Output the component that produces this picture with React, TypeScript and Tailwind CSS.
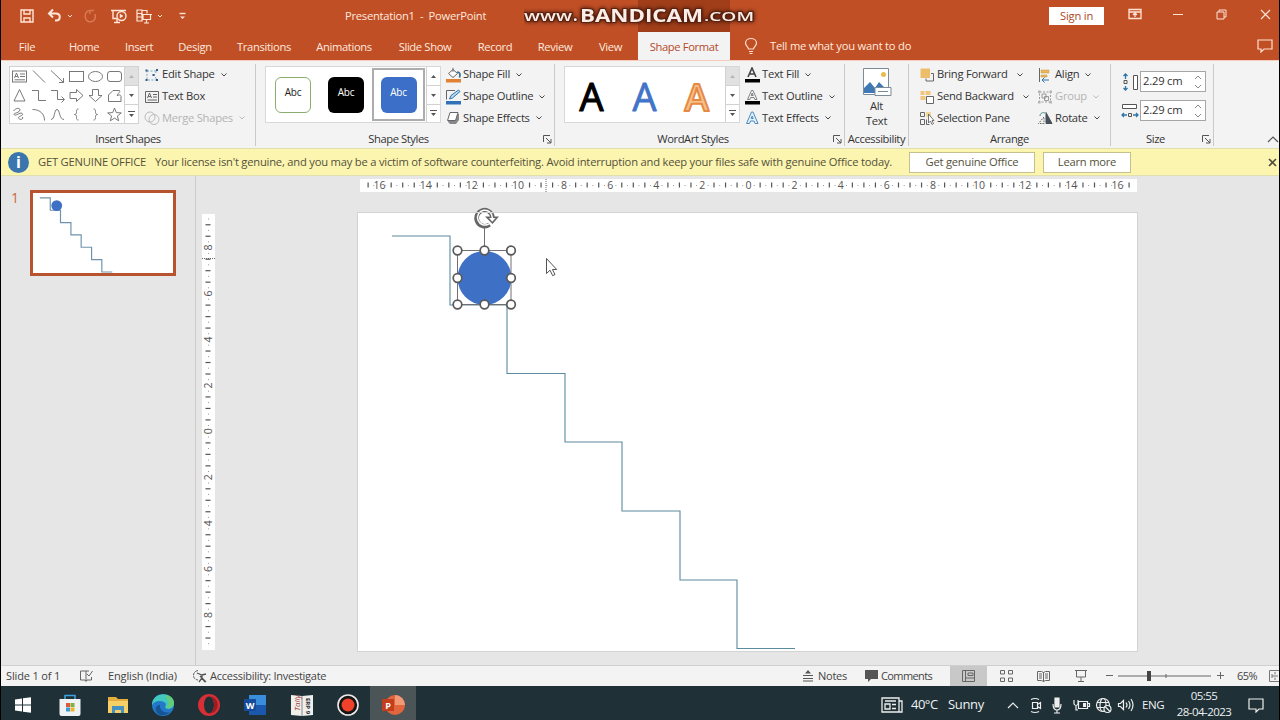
import type { ReactNode } from 'react';
import clsx from 'clsx';

const TABS = [
  { name: 'File', w: 'w-[52px]' },
  { name: 'Home', w: 'w-[62px]' },
  { name: 'Insert', w: 'w-[48px]' },
  { name: 'Design', w: 'w-[64px]' },
  { name: 'Transitions', w: 'w-[74px]' },
  { name: 'Animations', w: 'w-[86px]' },
  { name: 'Slide Show', w: 'w-[76px]' },
  { name: 'Record', w: 'w-[64px]' },
  { name: 'Review', w: 'w-[56px]' },
  { name: 'View', w: 'w-[55px]' },
];

const STAIRS =
  'M34 24H92V93H149V161.500H207V230H264V299H322V368H379V436.500H437';

// Outline shapes of the "Insert Shapes" gallery, each on a 19x19 cell
const SHAPES: ReactNode[] = [
  <><rect x="2.500" y="4" width="14" height="11" /><path d="M4.500 11l2-5 2 5M5.200 9.500h2.600M10 7h5M10 9.500h5M4.500 12.800h10.500" /></>,
  <path d="M4 3.500L16 15.500" />,
  <path d="M3 3.500L15.500 15.500M15.500 11v4.500H11" />,
  <rect x="2.500" y="4.500" width="14" height="10" />,
  <ellipse cx="9.500" cy="9.500" rx="7" ry="5" />,
  <rect x="2.500" y="4.500" width="14" height="10" rx="2.500" />,
  <path d="M9.500 3.500L15 15H4z" />,
  <path d="M3 4.500h6.500v10H17" />,
  <path d="M3 4.500h6.500v9H16M13.500 10.500l3 3-3 3" />,
  <path d="M3 6.500h6.500v-3l6.500 6-6.500 6v-3H3z" />,
  <path d="M6.500 3.500h6v6h3.500l-6.500 6-6.500-6h3.500z" />,
  <path d="M3.500 15.500V9L8 4.500h6.500c1.500 2-3 3-2 5.500 1-2 4-1 3.500 1v4.500z" />,
  <path d="M3.500 6c3-4 8-3 6 0-2 2.500-7 2-5 4 2 1 7-4 8-1 1 2-5 2-4 4s5 2 4-1" />,
  <path d="M3.500 4.500c8 0 12 5 12 11" />,
  <path d="M3 14.500c4 0 3-10 6-10s2 10 7 10" />,
  <path d="M11.500 4c-4 0 0 5-4 5.500 4 .5 0 5.500 4 5.500" />,
  <path d="M7.500 4c4 0 0 5 4 5.500-4 .5 0 5.500-4 5.500" />,
  <path d="M9.500 3l1.800 4.600 5 .3-3.900 3.100 1.300 4.800-4.200-2.700-4.200 2.700 1.300-4.800-3.900-3.100 5-.3z" />,
];

function Chevron({ className }: { className?: string }) {
  return (
    <svg viewBox="0 0 6 4" className={clsx('h-1 w-1.5 shrink-0', className)} fill="none" stroke="currentColor" strokeWidth=".9">
      <path d="M.5 .5L3 3 5.500 .5" />
    </svg>
  );
}

function GalleryScroll({ dimTop = true }: { dimTop?: boolean }) {
  return (
    <div className="flex w-[14px] flex-col border-l border-[#d2d2d2] bg-white text-[#555]">
      <div className={clsx('flex h-[19px] items-center justify-center border-b border-[#d2d2d2]', dimTop && 'bg-[#e1e1e1] text-[#b5b5b5]')}>
        <svg viewBox="0 0 5 3" className="h-[3px] w-[5px]" fill="currentColor"><path d="M0 3L2.500 0 5 3z" /></svg>
      </div>
      <div className="flex h-[19px] items-center justify-center border-b border-[#d2d2d2]">
        <svg viewBox="0 0 5 3" className="h-[3px] w-[5px]" fill="currentColor"><path d="M0 0h5L2.500 3z" /></svg>
      </div>
      <div className="flex flex-1 items-center justify-center">
        <svg viewBox="0 0 7 7" className="size-[7px]" fill="currentColor"><path d="M0 0h7v1H0zM1 3h5L3.500 6z" /></svg>
      </div>
    </div>
  );
}

interface CmdProps {
  icon: ReactNode;
  label: string;
  disabled?: boolean;
  arrow?: boolean;
  arrowGap?: string;
}

function Cmd({ icon, label, disabled, arrow = true, arrowGap = 'ml-[6px]' }: CmdProps) {
  return (
    <div className={clsx('flex h-[21.700px] items-center whitespace-nowrap', disabled ? 'text-[#b4b4b4]' : 'text-[#333]')}>
      <svg viewBox="0 0 16 16" className="mr-[2px] size-4 shrink-0" fill="none" stroke="#666">{icon}</svg>
      <span>{label}</span>
      {arrow && <Chevron className={arrowGap} />}
    </div>
  );
}

function Group({ label, width, launcher, children }: { label: string; width: string; launcher?: boolean; children: ReactNode }) {
  return (
    <div className={clsx('flex h-full shrink-0 flex-col pt-[3px]', width)}>
      <div className="flex h-[82px] flex-col border-r border-[#c9c9c9]">
        <div className="flex h-[67px]">{children}</div>
        <div className="flex h-4 items-center justify-center whitespace-nowrap pt-[3px] tracking-[-0.400px] text-[#333]">
          {!launcher && <span className="flex-1 text-center">{label}</span>}
          {launcher && (
            <>
              <span className="flex-1 pr-[14px] text-center">
                <span className="pl-[12px]">{label}</span>
              </span>
              <svg viewBox="0 0 9 9" className="mr-[2px] size-[9px] shrink-0" fill="none" stroke="#555"><path d="M.5 7V.5H7M3 3l5 5M8 4v4H4" /></svg>
            </>
          )}
        </div>
      </div>
    </div>
  );
}

function SizeField({ icon }: { icon: ReactNode }) {
  return (
    <div className="flex items-center">
      <svg viewBox="0 0 18 18" className="size-[18px]" fill="none" stroke="#555">{icon}</svg>
      <div className="ml-px flex h-[21px] w-[66px] items-center border border-[#a6a6a6] bg-white pl-[2px] tracking-[-0.200px] text-[#333]">
        <span className="flex-1">2.29 cm</span>
        <svg viewBox="0 0 8 14" className="mr-[3px] h-[14px] w-2" fill="none" stroke="#888"><path d="M1 4l3-3 3 3M1 10l3 3 3-3" /></svg>
      </div>
    </div>
  );
}

function HorizontalRuler() {
  const ticks = Array.from({ length: 133 }, (_, i) => i - 66);
  return (
    <svg viewBox="0 0 777 13" className="h-[13px] w-[777px] overflow-visible bg-white" fontSize="10.500" fill="#555" textAnchor="middle">
      {ticks.map((t) => {
        const x = 388.5 + t * 5.765;
        if (t % 8 === 0) return <text key={t} x={x} y="10.300">{Math.abs(t / 4)}</text>;
        return t % 2 === 0
          ? <rect key={t} x={x - 0.5} y="3.500" width="1.200" height="5" />
          : <rect key={t} x={x - 0.5} y="6" width="1" height="1" fill="#999" />;
      })}
      <path d="M186 0v13" stroke="#666" strokeDasharray="1 1" />
    </svg>
  );
}

function VerticalRuler() {
  const ticks = Array.from({ length: 75 }, (_, i) => i - 37);
  return (
    <svg viewBox="0 0 13 436" className="h-[436px] w-[13px] overflow-visible bg-white" fontSize="10.500" fill="#555" textAnchor="middle">
      {ticks.map((t) => {
        const y = 217.3 + t * 5.74;
        if (t % 8 === 0) return <text key={t} transform={`translate(10.300 ${y}) rotate(-90)`}>{Math.abs(t / 4)}</text>;
        return t % 2 === 0
          ? <rect key={t} x="3.500" y={y - 0.5} width="5" height="1.200" />
          : <rect key={t} x="6" y={y - 0.5} width="1" height="1" fill="#999" />;
      })}
      <path d="M0 44.500h13" stroke="#666" strokeDasharray="1 1" />
    </svg>
  );
}

function TitleBar() {
  return (
    <div className="flex h-8 items-center text-white">
      <div className="flex w-[343px] items-center">
        <svg viewBox="0 0 190 20" className="ml-[17px] h-5 w-[190px]" fill="none" stroke="#ffe6d8" strokeWidth="1.400">
          <path d="M3 4h12v12H3zM6 4v4h6V4M6 16v-4h6v4" />
          <path d="M35 3.500l-4 4 4 4M31 7.500h7c5 0 5 7 0 7h-1" strokeWidth="2" />
          <path d="M50 9l2 2 2-2M140 9l2 2 2-2" strokeWidth="1" />
          <path d="M71 4.500c-5 2-5 9-.5 11 5 1.500 8-3 6.500-7.500M72 8V4.500h4" stroke="#da7a55" />
          <path d="M93 4.500h15M95 4.500v8h4M99 12.500v4M96 16.500h6" />
          <circle cx="103.500" cy="10" r="4.500" />
          <path d="M102 8l3 2-3 2z" fill="#ffe6d8" strokeWidth=".5" />
          <path d="M119 4h5v11h-5zM119 7.500h5M119 11h5M124 4.500h5v3M123 8.500h11M125 8.500v5h7.500v-5M128.500 14v3M126 17h5" strokeWidth="1.200" />
          <path d="M161.500 7.500h6" /><path d="M162 10.500h5l-2.500 2.500z" fill="#ffe6d8" stroke="none" />
        </svg>
      </div>
      <span className="w-[180px] whitespace-pre pl-px pt-px text-[11.200px] tracking-[-0.260px] text-[#ffe9de]">Presentation1  -  PowerPoint</span>
      <div className="h-8 w-[207px]">
        <svg viewBox="0 0 240 32" className="h-8 w-[240px]" fontWeight="700" fill="#fbeee8" stroke="#5a2310" strokeWidth="2" strokeLinejoin="round" paintOrder="stroke">
          <path d="M114 0h92v32h-92z" fill="#8f3512" stroke="none" opacity=".65" />
          <g className="drop-shadow-[0_0_2px_#3a1006]">
            <text x="0" y="21" fontSize="15" fontWeight="600" textLength="48" lengthAdjust="spacingAndGlyphs">www</text>
            <text x="49" y="21" fontSize="16">.</text>
            <text x="56" y="22" fontSize="17.500" textLength="123" lengthAdjust="spacingAndGlyphs">BANDICAM</text>
            <text x="180" y="21" fontSize="13" fontWeight="600" textLength="50" lengthAdjust="spacingAndGlyphs">.COM</text>
          </g>
        </svg>
      </div>
      <div className="ml-[318px] flex h-[18px] w-[55px] items-center justify-center bg-white pt-px text-[11.200px] tracking-[-0.200px] text-[#a94a28]">Sign in</div>
      <svg viewBox="0 0 150 20" className="ml-[22px] mt-[-5px] h-5 w-[150px]" fill="none" stroke="#ffe3d5">
        <path d="M3 5.500h12v9H3zM3 8h12M9 13V9M7 11l2-2 2 2" strokeWidth="1.300" />
        <path d="M47 10.500h10M91 8h7v7h-7zM93 8V6h7v7h-2" />
        <path d="M135 6l9 9M144 6l-9 9" strokeWidth="1.200" />
      </svg>
    </div>
  );
}

function TabRow() {
  return (
    <div className="flex h-7 items-center text-[11.200px] tracking-[-0.350px] text-[#ffe9de]">
      {TABS.map((t) => (
        <div key={t.name} className={clsx('shrink-0 whitespace-nowrap pt-[2px] text-center', t.w)}>{t.name}</div>
      ))}
      <div className="flex h-7 w-[92px] items-center justify-center whitespace-nowrap bg-[#f3f3f3] pt-[2px] text-[#b5492a]">Shape Format</div>
      <svg viewBox="0 0 14 18" className="ml-[14px] h-[18px] w-[14px]" fill="none" stroke="#ffe0d0" strokeWidth="1.200">
        <path d="M4.500 12c0-2-3-3-3-6C1.500 0 12.500 0 12.500 6c0 3-3 4-3 6zM5 14.500h4M5.500 16.500h3" />
      </svg>
      <span className="ml-[12px] w-[487px] whitespace-nowrap font-medium tracking-[-0.220px]">Tell me what you want to do</span>
      <svg viewBox="0 0 16 14" className="h-[14px] w-4" fill="none" stroke="#ffe0d0" strokeWidth="1.200"><path d="M1 1h14v9H7l-3 3v-3H1z" /></svg>
    </div>
  );
}

function Ribbon() {
  return (
    <div className="flex h-[88px] border-t border-[#f6cdbd] bg-[#f3f3f3] text-[11.200px] tracking-[-0.250px]">
      <Group label="Insert Shapes" width="w-[255px]">
        <div className="ml-2 mt-[2px] flex h-[58px] border border-[#d2d2d2] bg-white">
          <div className="grid grid-cols-[repeat(6,19px)] grid-rows-[repeat(3,19px)]">
            {SHAPES.map((s, i) => (
              <svg key={i} viewBox="0 0 19 19" className="size-[19px]" fill="none" stroke="#6a6a6a" strokeWidth=".9">{s}</svg>
            ))}
          </div>
          <GalleryScroll />
        </div>
        <div className="ml-[5px]">
          <Cmd label="Edit Shape" icon={<><path d="M3 4h10l-3 4 3 5H3z" stroke="#7ba6c4" strokeDasharray="2 1.500" /><path d="M1.500 2.500h2v2h-2zM12 2h2v2h-2zM1.500 12h2v2h-2zM12 12h2v2h-2zM8.500 7h2v2h-2z" fill="#2f5f86" stroke="none" /></>} />
          <Cmd label="Text Box" arrow={false} icon={<path d="M1.500 2.500h13v11h-13zM3.500 9l2-5 2 5M4.200 7.500h2.600M9 5.500h4M9 8h4M3.500 11h9.500" />} />
          <Cmd label="Merge Shapes" disabled icon={<g stroke="#bbb"><circle cx="6" cy="7" r="5" /><circle cx="10" cy="9.500" r="5" /></g>} />
        </div>
      </Group>

      <Group label="Shape Styles" width="w-[299px]" launcher>
        <div className="ml-[9px] mt-[2px] flex h-[57px] border border-[#d8d8d8] bg-white text-[10px] tracking-[-0.200px]">
          <div className="flex w-[160px] items-center">
            <div className="ml-[9px] flex h-9 w-9 justify-center rounded-md border border-[#8cae6c] pt-[7px] text-[#222]">Abc</div>
            <div className="ml-[17px] flex h-9 w-9 justify-center rounded-md bg-black pt-[8px] text-white">Abc</div>
            <div className="ml-[8px] flex h-[53px] w-[53px] items-center justify-center border-2 border-[#adadad]">
              <div className="flex h-9 w-9 justify-center rounded-md bg-[#3c6fc7] pt-[8px] text-white">Abc</div>
            </div>
          </div>
          <GalleryScroll dimTop={false} />
        </div>
        <div className="ml-[4px]">
          <Cmd label="Shape Fill" icon={<><path d="M8 .8v4M3.500 6.500L8 2.500l4.500 4-4.500 4z" fill="#fff" /><path d="M12 5c3 0 3.500 2.500 2.500 5.500" stroke="#2f6e9c" strokeWidth="1.700" /><path d="M1 12h15v3.500H1z" fill="#e08232" stroke="none" /></>} />
          <Cmd label="Shape Outline" icon={<><path d="M10 1.500H1.500v9" /><path d="M4.500 10l1.500-3.500L13.500 1l1.500 1.500L7.500 9z" fill="#bcd8ec" stroke="#2f75a8" /><path d="M1 12h15v3.500H1z" fill="#3071b9" stroke="none" /></>} />
          <Cmd label="Shape Effects" icon={<><path d="M5 4h9v6l-3 4H5l-2-2z" fill="#888" stroke="none" /><path d="M5 2.500h8l-2.500 8h-8z" fill="#fff" /></>} />
        </div>
      </Group>

      <Group label="WordArt Styles" width="w-[290px]" launcher>
        <div className="ml-[9px] mt-[2px] flex h-[57px] border border-[#d8d8d8] bg-white">
          <svg viewBox="0 0 160 55" className="h-[55px] w-[160px]" fontSize="38" textAnchor="middle" strokeLinejoin="round">
            <text x="26.500" y="44" fill="#000" stroke="#000" strokeWidth="1.200">A</text>
            <text x="79.500" y="44" fill="#3f74c8" stroke="#3f74c8" strokeWidth=".8">A</text>
            <text x="131.500" y="44" fontSize="37" fontWeight="600" fill="#f8c08a" stroke="#e58a43" strokeWidth="2">A</text>
          </svg>
          <GalleryScroll />
        </div>
        <div className="ml-[4px]">
          <Cmd label="Text Fill" icon={<><path d="M4 10l4-9 4 9M5.500 7h5" strokeWidth="1.600" stroke="#444" /><path d="M1 12h15v3.500H1z" fill="#000" stroke="none" /></>} />
          <Cmd label="Text Outline" icon={<><path d="M3.500 10.500l4-9h1.500l4 9h-2.200l-.8-2H6.600l-.8 2zM7.200 6.500h2L8.200 4z" strokeWidth=".8" /><path d="M1 12h15v3.500H1z" fill="#000" stroke="none" /></>} />
          <Cmd label="Text Effects" icon={<path d="M2.500 13.500l5-11.500h1.500l5 11.500h-3l-1-2.500H6.500l-1 2.500zM7.200 8.500h2L8.200 6z" stroke="#4b8cc0" fill="#e3f0fa" />} />
        </div>
      </Group>

      <Group label="Accessibility" width="w-[64px]">
        <div className="flex flex-1 flex-col items-center whitespace-nowrap pt-[3px] text-center leading-[15px] text-[#333]">
          <svg viewBox="0 0 30 30" className="mb-px size-[30px]" fill="none" stroke="#7b8c98">
            <path d="M1.500 1.500h25v26h-25z" fill="#fff" />
            <path d="M2 26v-5l6-6 5 6 4-6 7 7v4z" fill="#3f79b5" stroke="none" />
            <circle cx="21.500" cy="7.500" r="2.500" fill="#e7bb4d" stroke="none" />
            <path d="M13 20.500h16v8H13z" fill="#fff" /><path d="M16 24.500h10" />
          </svg>
          <span>Alt</span>
          <span>Text</span>
        </div>
      </Group>

      <Group label="Arrange" width="w-[202px]">
        <div className="ml-[10px] w-[118px]">
          <Cmd label="Bring Forward" arrowGap="ml-[9px]" icon={<><path d="M12 6.500h2.500V14H7v-2.500" /><path d="M1.500 1.500h9.500v9.500H1.500z" fill="#edbd6a" stroke="none" /></>} />
          <Cmd label="Send Backward" arrowGap="ml-[9px]" icon={<><path d="M1.500 2h4v4h-4zM6.500 2h5v4h-5zM1.500 7h5v4h-5z" fill="#f0c57c" stroke="none" /><path d="M7.500 7.500h7v7h-7z" fill="#fff" /></>} />
          <Cmd label="Selection Pane" arrow={false} icon={<><path d="M1.500 2.500h4v4h-4zM1.500 9.500h4v5h-4zM7.500 9.500v5h3" /><path d="M7 2h5v5H7z" fill="#f0d898" stroke="none" /><path d="M9.500 4v9l2-2 1.500 3.500 1.500-1-1.500-3H15z" fill="#fff" stroke="#555" strokeWidth=".8" /></>} />
        </div>
        <div>
          <Cmd label="Align" icon={<><path d="M2.500 1v14" /><path d="M4 3h8v3H4zM4 8h6v2H4z" fill="#eab75d" stroke="#c9963f" strokeWidth=".5" /><path d="M12 13H5m2.500-2.500L5 13l2.500 2.500" stroke="#2f75b5" /></>} />
          <Cmd label="Group" disabled icon={<g stroke="#999"><path d="M2.500 3h11v10h-11z" strokeDasharray="2 1.500" /><path d="M5 5h4v4H5zM7.500 7.500h4v4h-4z" /><path d="M1 1.500h2.500V4H1zM12.500 1.500H15V4h-2.500zM1 12h2.500v2.500H1zM12.500 12H15v2.500h-2.500z" fill="#b5b5b5" stroke="none" /></g>} />
          <Cmd label="Rotate" icon={<><path d="M7 13.500H1.500L7 7z" strokeDasharray="1.500 1" /><path d="M9 2.500l6 11H9z" fill="#47515a" stroke="#47515a" /><path d="M3 6c0-3 3-4 5-3" stroke="#459087" /></>} />
        </div>
      </Group>

      <Group label="Size" width="w-[103px]" launcher>
        <div className="ml-[10px] flex flex-col gap-[8px] pt-[7px]">
          <SizeField icon={<><path d="M12.500 2.500h4v14h-4z" fill="#fff" /><path d="M4.500 1v5M2.500 3l2-2 2 2M4.500 17v-4M2.500 15l2 2 2-2" stroke="#2f75a8" strokeWidth="1.300" /><path d="M3 7.500h3v3H3z" /></>} />
          <SizeField icon={<><path d="M1.500 2.500h14v4h-14z" fill="#fff" /><path d="M1 13h5M3 11l-2 2 2 2M17 13h-5M15 11l2 2-2 2" stroke="#2f75a8" strokeWidth="1.300" /><path d="M7.500 11.500h3v3h-3z" /></>} />
        </div>
      </Group>

      <div className="flex flex-1 items-end justify-end pb-[5px]">
        <svg viewBox="0 0 12 8" className="h-2 w-3" fill="none" stroke="#555" strokeWidth="1.200"><path d="M1 7l5-5 5 5" /></svg>
      </div>
    </div>
  );
}

function LicenseBar() {
  return (
    <div className="flex h-[28px] items-center whitespace-nowrap border-y border-[#e2dfae] bg-[#fbf5b0] text-[11.200px] text-[#55513a]">
      <div className="ml-[7px] flex size-[21px] items-center justify-center rounded-full bg-[#3a76ad] text-[16px] font-bold leading-none text-white">
        i
      </div>
      <span className="ml-[9px] w-[117px] tracking-[-0.200px]">GET GENUINE OFFICE</span>
      <span className="w-[754px] tracking-[-0.210px]">
        Your license isn't genuine, and you may be a victim of software counterfeiting. Avoid interruption and keep your files safe with genuine Office today.
      </span>
      <div className="flex h-[21px] w-[126px] items-center justify-center border border-[#c6c08e] bg-white tracking-[-0.230px]">Get genuine Office</div>
      <div className="ml-[8px] flex h-[21px] w-[88px] items-center justify-center border border-[#c6c08e] bg-white tracking-[-0.230px]">Learn more</div>
      <svg viewBox="0 0 9 9" className="ml-[137px] size-[9px]" stroke="#555040" strokeWidth="1.700"><path d="M1 1l7 7M8 1L1 8" /></svg>
    </div>
  );
}

function Slide() {
  const xs = [99.5, 126.5, 153];
  const ys = [38.5, 66, 92.5];
  const handles = xs.flatMap((x) => ys.map((y) => [x, y])).filter(([x, y]) => x !== 126.5 || y !== 66);
  return (
    <svg viewBox="0 1 779 438" className="h-[438px] w-[779px] overflow-visible bg-white outline outline-[#d3d3d3]" fill="none">
      <path d={STAIRS} stroke="#5c8a9f" strokeWidth="1.100" />
      <circle cx="126.500" cy="66" r="27" fill="#3e70c6" />
      <path d="M99.500 38.500h53.500v54h-53.500zM126.500 38.500V16" stroke="#707070" />
      {handles.map(([x, y]) => (
        <circle key={`${x}-${y}`} cx={x} cy={y} r="4.300" fill="#fff" stroke="#5a5a5a" strokeWidth="1.700" />
      ))}
      <path d="M131.500 12.500A8 8 0 1 1 134.500 5" stroke="#666" strokeWidth="4.600" />
      <path d="M127 4.500h14l-6.500 7.500z" fill="#666" />
      <path d="M131 11.800A7.400 7.400 0 1 1 134.300 6" stroke="#fff" strokeWidth="1.500" />
      <path d="M131 6h6.500l-3.200 3.800z" fill="#fff" />
      <path d="M188.500 46.500v15l3.500-3.300 2.700 5.500 2.300-1.200-2.600-5h4.300z" fill="#fff" stroke="#555" />
    </svg>
  );
}

function Workspace() {
  return (
    <div className="flex h-[489px] bg-[#e6e6e6]">
      <div className="flex w-[195px] border-r border-[#cbcbcb]">
        <span className="w-[29px] pl-[10px] pt-[11px] text-[14px] text-[#cc6647]">1</span>
        <div className="mt-[14px] h-[86px] w-[146px] border-[3px] border-[#b8532f] bg-white">
          <svg viewBox="0 0 779 439" className="h-[80px] w-[140px]" fill="none">
            <path d={STAIRS} stroke="#6f93ac" strokeWidth="6.500" transform="translate(4 0)" />
            <circle cx="132" cy="67" r="30" fill="#3e70c6" />
          </svg>
        </div>
      </div>
      <div className="flex flex-1">
        <div className="ml-[6px] mt-[38px]">
          <VerticalRuler />
        </div>
        <div className="ml-[143px] mt-[3px] flex flex-col">
          <div className="ml-[2px] h-[13px]"><HorizontalRuler /></div>
          <div className="mt-[21px]"><Slide /></div>
        </div>
      </div>
    </div>
  );
}

function StatusBar() {
  return (
    <div className="flex h-[21px] items-center whitespace-nowrap border-t border-[#cfcfcf] bg-[#f3f3f3] text-[11px] tracking-[-0.250px] text-[#444]">
      <span className="ml-[5px] w-[73px] tracking-[-0.150px]">Slide 1 of 1</span>
      <svg viewBox="0 0 14 14" className="size-[14px]" fill="none" stroke="#666"><path d="M7 2H1.500v9H6l1 1.500L8 11h4.500V8M7 2v10M7 2h3M8 5l2 2 3.500-5" /></svg>
      <span className="ml-[15px] w-[84px] tracking-[-0.150px]">English (India)</span>
      <svg viewBox="0 0 15 14" className="h-[14px] w-[15px]" fill="none" stroke="#555"><path d="M6 1.500c-6 1-6 9 0 9.500" strokeDasharray="3 1" /><path d="M5 4l5 2 4-1M10 6v3l-3 4M10 9l3 4M8 7l6 6" strokeWidth="1.300" /></svg>
      <span className="ml-[3px] w-[592px]">Accessibility: Investigate</span>
      <svg viewBox="0 0 12 12" className="size-3" fill="none" stroke="#555"><path d="M1 5.500h10M1 8.500h10M1 11h10" /><path d="M6 0l3 3.500H3z" fill="#555" stroke="none" /></svg>
      <span className="ml-[4px] w-[47px]">Notes</span>
      <svg viewBox="0 0 13 12" className="h-3 w-[13px]" fill="#555"><path d="M0 0h13v9H6l-3 3V9H0z" /></svg>
      <span className="ml-[3px] w-[69px] tracking-[-0.600px]">Comments</span>
      <div className="flex h-[20px] w-[37px] items-center justify-center bg-[#c8c8c8]">
        <svg viewBox="0 0 13 12" className="h-3 w-[13px]" fill="none" stroke="#666"><path d="M.5 .5h12v11H.5zM3.500 .5v11M6 3h5v2.500H6zM3.500 8h9" /></svg>
      </div>
      <svg viewBox="0 0 88 14" className="ml-[13px] h-[14px] w-[88px] shrink-0" fill="none" stroke="#666">
        <path d="M.5 1.500h4v3.500h-4zM8.500 1.500h4v3.500h-4zM.5 9h4v3.500h-4zM8.500 9h4v3.500h-4z" />
        <path d="M37.500 2.500h4l2 1 2-1h4v9h-4l-2 1-2-1h-4zM43.500 3.500v9M39 5h3M39 7h3M39 9h3M45 5h3M45 7h3M45 9h3" />
        <path d="M75 1.500h12M76.500 2v6h9V2M81 8v4M78 12.500h6" />
      </svg>
      <svg viewBox="0 0 120 14" className="ml-[17px] h-[14px] w-[120px] shrink-0" fill="none" stroke="#666">
        <path d="M1 6.500h7M13 7h93M61 5v4M112 6.500h7M115.500 3v7" />
        <path d="M42 2h4v10h-4z" fill="#444" stroke="none" />
      </svg>
      <span className="ml-[12px] w-[32px] shrink-0 tracking-[-0.500px]">65%</span>
      <svg viewBox="0 0 10 14" className="h-[14px] w-[10px] shrink-0" fill="none" stroke="#777"><path d="M10 1.500H.5v11H10M3 7h6M6 3v2.500M6 8.500V11M3 5v4" /></svg>
    </div>
  );
}

function TaskIcon({ width, children, active }: { width: string; children: ReactNode; active?: boolean }) {
  return (
    <div className={clsx('flex h-[34px] shrink-0 items-center justify-center', width, active && 'bg-[#4b5558]')}>
      <svg viewBox="0 0 24 24" className="mt-[3px] size-6">{children}</svg>
    </div>
  );
}

function Taskbar() {
  return (
    <div className="flex h-[34px] items-center bg-[#1f3037] text-[12px] text-[#eef1f2]">
      <TaskIcon width="w-[44px]">
        <path d="M4 6.500l7-1v6H4zM12 5.300l8-1.100v7.300h-8zM4 12.500h7v6l-7-1zM12 12.500h8v7.300l-8-1.100z" fill="#fff" />
      </TaskIcon>
      <TaskIcon width="w-[50px]">
        <path d="M7 6V2.500h10V6" fill="none" stroke="#3ba3e0" strokeWidth="1.500" />
        <path d="M1.500 6h21v15q0 2-2 2h-17q-2 0-2-2z" fill="#eef2f3" />
        <path d="M8 10h4v4H8z" fill="#e2553a" /><path d="M12.500 10h4v4h-4z" fill="#7eb13d" />
        <path d="M8 14.500h4v4H8z" fill="#3a98d6" /><path d="M12.500 14.500h4v4h-4z" fill="#f0b429" />
      </TaskIcon>
      <TaskIcon width="w-[45px]">
        <path d="M2 4h8l2 2h10v14H2z" fill="#e5ad3c" /><path d="M2 8h20v12H2z" fill="#f6cf67" />
        <path d="M6 20v-7h12v7h-3v-3H9v3z" fill="#4591c4" />
      </TaskIcon>
      <TaskIcon width="w-[46px]">
        <circle cx="12" cy="12" r="11" fill="#2379c7" />
        <path d="M1 12C1-2 22-2 23 10c0 7-8 7-9 4 1-2 2-3-1-5C9 7 3 8 1 12z" fill="#43c7c1" />
        <path d="M13 2c7 0 10 4 10 8s-5 6-8 5c4-5 2-9-2-13z" fill="#62cc7a" />
        <path d="M9 12c-1 5 5 9 10 7-5 5-12 4-14-1-1-4 1-6 4-6z" fill="#165493" />
      </TaskIcon>
      <TaskIcon width="w-[45px]">
        <circle cx="12" cy="12" r="11" fill="#d62f35" />
        <ellipse cx="12" cy="12" rx="5" ry="8.500" fill="#1f3037" />
        <path d="M14 3.500c9 2 9 15 0 17 4-5 4-12 0-17z" fill="#9d1c23" />
      </TaskIcon>
      <TaskIcon width="w-[47px]">
        <path d="M6 2h17v20H6z" fill="#3a8ddb" /><path d="M6 12h17v10H6z" fill="#1b57ac" />
        <path d="M1 6h12v12H1z" fill="#164a9c" />
        <text x="7" y="15.500" fontSize="9" fontWeight="700" fill="#fff" textAnchor="middle">W</text>
      </TaskIcon>
      <TaskIcon width="w-[47px]">
        <path d="M1 2l11 1 11-1v20l-11 1-11-1z" fill="#efefeb" /><path d="M12 3v20" stroke="#888" />
        <text transform="translate(9.500 18) rotate(-90)" fontSize="8" fontStyle="italic" fill="#a3312c">Tally</text>
        <text transform="translate(15.500 5) rotate(90)" fontSize="6" fontWeight="700" fill="#333">ERP 9</text>
      </TaskIcon>
      <TaskIcon width="w-[45px]">
        <circle cx="12" cy="12" r="10" fill="#151515" stroke="#f0eaea" strokeWidth="1.600" />
        <circle cx="12" cy="12" r="6.500" fill="#f0422b" />
      </TaskIcon>
      <TaskIcon width="w-[46px]" active>
        <circle cx="14" cy="12" r="10" fill="#e2663d" /><path d="M14 2a10 10 0 0 1 10 10H14z" fill="#f29a78" />
        <path d="M1 6h12v12H1z" fill="#c43e1c" />
        <text x="7" y="15.500" fontSize="9" fontWeight="700" fill="#fff" textAnchor="middle">P</text>
      </TaskIcon>

      <div className="flex flex-1 items-center whitespace-nowrap pl-[465px]">
        <svg viewBox="0 0 22 16" className="mt-[4px] h-4 w-[22px]" fill="none" stroke="#eee" strokeWidth="1.300"><path d="M1 1h17v14H1zM18 4h3v11h-3M4 4h11M4 7h5v5H4zM11 7.500h4M11 11.500h4" /></svg>
        <span className="ml-[8px] mt-[3px] w-[37px] text-[13px] tracking-[-0.500px]">40°C</span>
        <span className="mt-[3px] w-[59px] text-[13px] tracking-[-0.350px]">Sunny</span>
        <svg viewBox="0 0 130 20" className="mt-[4px] h-5 w-[130px]" fill="none" stroke="#eee" strokeWidth="1.200">
          <path d="M1 13l5-5 5 5" />
          <path d="M25.500 7.500h5v6h-5zM30.500 9.500l3-2v6l-3-2M24 4.500q4-2 8 0M24 16.500q4 2 8 0" />
          <path d="M48 3h4v9h-4z" fill="#eee" /><path d="M46 9c0 8 8 8 8 0M50 15v3M47 18h6" />
          <path d="M71.500 6.500h9v7h-9zM80.500 8.500h2v3h-2zM67 5v4q2 3 4 0V5M69 10v5h2" /><path d="M76 8h3v4h-3z" fill="#eee" stroke="none" />
          <circle cx="96" cy="10" r="6.500" /><ellipse cx="96" cy="10" rx="3" ry="6.500" /><path d="M90 7.500h12M90 12.500h12" />
          <circle cx="100.500" cy="14" r="3.500" fill="#1f3037" /><path d="M98 11.500l5 5" />
          <path d="M111.500 8.500h2l3-3v9l-3-3h-2zM119 7.500q2 2.500 0 5M121.500 6q3 4 0 8M124 4q4 6 0 12" />
        </svg>
        <span className="ml-[5px] mt-[3px] w-[33px] text-[11.500px] tracking-[-0.400px]">ENG</span>
        <div className="flex w-[58px] flex-col text-center text-[11.500px] leading-[16px] tracking-[-0.550px]">
          <span className="pt-[2px]">05:55</span>
          <span>28-04-2023</span>
        </div>
        <svg viewBox="0 0 16 16" className="ml-[15px] mt-[4px] size-4" fill="none" stroke="#eee" strokeWidth="1.200"><path d="M1 2h14v10h-4l-3 3v-3H1z" /></svg>
      </div>
    </div>
  );
}

export default function App() {
  return (
    <div className="flex h-[720px] w-[1280px] flex-col overflow-hidden border-x border-black font-['Open_Sans','Noto_Sans',sans-serif]">
      <div className="h-[60px] bg-[#c04f26]">
        <TitleBar />
        <TabRow />
      </div>
      <Ribbon />
      <LicenseBar />
      <Workspace />
      <StatusBar />
      <Taskbar />
    </div>
  );
}
